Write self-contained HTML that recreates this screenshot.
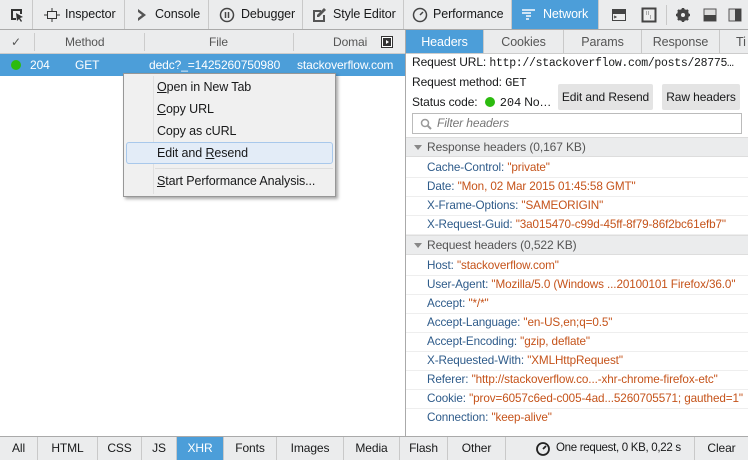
<!DOCTYPE html>
<html><head><meta charset="utf-8"><style>
*{box-sizing:border-box;margin:0;padding:0}
body{width:748px;height:460px;overflow:hidden;position:relative;background:#fff;font-family:"Liberation Sans","DejaVu Sans",sans-serif;font-size:12px;color:#18191a;letter-spacing:-0.1px}
.a{position:absolute;white-space:nowrap}
#tb{left:0;top:0;width:748px;height:30px;background:#ebeced;border-bottom:1px solid #aaa}
.t{position:absolute;top:0;height:29px;line-height:29px;border-right:1px solid #c9c9c9;font-size:12.5px;color:#18191a;white-space:nowrap}
.t svg{position:absolute;top:7px}
.net{background:#4c9ed9;color:#fff}
#colh{left:0;top:30px;width:406px;height:24px;background:#ebeced;border-bottom:1px solid #ccc;color:#555;font-size:12px;line-height:24px}
#sel{left:0;top:54px;width:406px;height:22px;background:#4c9ed9;color:#fff;line-height:22px}
#vs{left:405px;top:30px;width:1px;height:406px;background:#aaa}
#sub{left:406px;top:30px;width:342px;height:24px;background:#ebeced;border-bottom:1px solid #ccc;line-height:24px;font-size:12.5px;overflow:hidden}
.st{position:absolute;top:0;height:24px;text-align:center;border-right:1px solid #c9c9c9;color:#555}
.btn{position:absolute;background:#e4e4e4;border-radius:2px;height:26px;line-height:26px;text-align:center;color:#18191a;white-space:nowrap}
.sec{position:absolute;left:406px;width:342px;height:20px;background:#ebeced;border-top:1px solid #ddd;border-bottom:1px solid #ddd;line-height:19px;color:#555;padding-left:21px;white-space:nowrap}
.sec:before{content:"";position:absolute;left:8px;top:7px;border:4px solid transparent;border-top:5px solid #888}
.r{position:absolute;left:406px;width:342px;height:19px;line-height:18px;border-bottom:1px solid #eee;padding-left:21px;color:#2e5b8a;white-space:nowrap;overflow:hidden;font-size:11.7px}
.r b{font-weight:normal;color:#c5531a}
#bb{left:0;top:436px;width:748px;height:24px;background:#ebeced;border-top:1px solid #aaa;line-height:23px}
.f{position:absolute;top:0;height:23px;text-align:center;border-right:1px solid #c9c9c9;color:#18191a}
#cm{left:123px;top:73px;width:213px;height:124px;background:#f0f0f0;border:1px solid #979797;box-shadow:2px 2px 3px rgba(0,0,0,.35)}
.mi{position:absolute;left:33px;font-size:12.5px;white-space:nowrap}
u{text-decoration:underline}
</style></head><body>
<div class="a" id="tb">
 <div class="t" style="left:0;width:33px"><svg width="16" height="16" style="left:9px"><path d="M2 2h11v5h-2V4H4v7h3v2H2z" fill="#333"/><path d="M7 6l7 4-3 1 2 3-1 1-2-3-2 2z" fill="#333"/></svg></div>
 <div class="t" style="left:33px;width:92px;padding-left:32px"><svg width="16" height="16" style="left:11px"><rect x="3.5" y="4.5" width="9" height="7" fill="none" stroke="#333"/><path d="M0 8h3M13 8h3M8 1v3M8 12v3" stroke="#333"/></svg>Inspector</div>
 <div class="t" style="left:125px;width:84px;padding-left:30px"><svg width="16" height="16" style="left:10px"><path d="M3 2l8 6-8 6V11l4-3-4-3z" fill="#555"/></svg>Console</div>
 <div class="t" style="left:209px;width:94px;padding-left:32px"><svg width="16" height="16" style="left:10px"><circle cx="8" cy="8" r="6.5" fill="none" stroke="#444" stroke-width="1.5"/><path d="M6.5 5v6M9.5 5v6" stroke="#444" stroke-width="1.5"/></svg>Debugger</div>
 <div class="t" style="left:303px;width:101px;padding-left:30px"><svg width="16" height="16" style="left:8px"><path d="M2 3h8v2H4v8h8V8h2v7H2z" fill="#555"/><path d="M13 1l2 2-7 7H6V8z" fill="#555"/></svg>Style Editor</div>
 <div class="t" style="left:404px;width:108px;padding-left:29px"><svg width="16" height="16" style="left:8px"><circle cx="8" cy="8" r="6.5" fill="none" stroke="#444" stroke-width="1.5"/><path d="M8 8l3-3" stroke="#444" stroke-width="1.5"/></svg>Performance</div>
 <div class="t net" style="left:512px;width:87px;padding-left:31px;color:#fff"><svg width="16" height="16" style="left:9px"><path d="M1 3h13M1 6h9M5 9h5M5 12h3" stroke="#cfe4f5" stroke-width="2"/></svg>Network</div>
 <svg class="a" style="left:611px;top:7px" width="16" height="16"><rect x="1" y="2" width="14" height="12" fill="#444"/><rect x="2" y="7" width="12" height="6" fill="#eee"/><path d="M3 9l2 1-2 1" stroke="#444" fill="none"/></svg>
 <svg class="a" style="left:641px;top:7px" width="16" height="16"><rect x="1.5" y="1.5" width="13" height="13" fill="#eee" stroke="#444" stroke-width="2"/><path d="M5 5h1M7 5h1M5 7h1M7 7h1M9 9h1M9 11h1" stroke="#666"/></svg>
 <div class="a" style="left:666px;top:5px;width:1px;height:20px;background:#c9c9c9"></div>
 <svg class="a" style="left:675px;top:7px" width="16" height="16"><circle cx="8" cy="8" r="4.5" fill="none" stroke="#444" stroke-width="3"/><path d="M8 1v14M1 8h14M3 3l10 10M13 3L3 13" stroke="#444" stroke-width="2.5"/><circle cx="8" cy="8" r="2" fill="#ebeced"/></svg>
 <svg class="a" style="left:703px;top:8px" width="14" height="14"><rect x="1" y="1" width="12" height="12" fill="#ddd" stroke="#555"/><rect x="1" y="7" width="12" height="6" fill="#444"/></svg>
 <svg class="a" style="left:728px;top:8px" width="14" height="14"><rect x="1" y="1" width="12" height="12" fill="#ddd" stroke="#555"/><rect x="7" y="1" width="6" height="12" fill="#444"/></svg>
</div>
<div class="a" id="colh">
 <span class="a" style="left:11px">✓</span>
 <div class="a" style="left:34px;top:3px;width:1px;height:18px;background:#ccc"></div>
 <span class="a" style="left:65px">Method</span>
 <div class="a" style="left:144px;top:3px;width:1px;height:18px;background:#ccc"></div>
 <span class="a" style="left:209px">File</span>
 <div class="a" style="left:293px;top:3px;width:1px;height:18px;background:#ccc"></div>
 <span class="a" style="left:333px">Domai</span>
 <svg class="a" style="left:381px;top:6px" width="12" height="12"><rect x="0.5" y="0.5" width="11" height="11" fill="#fff" stroke="#333"/><rect x="2" y="2" width="8" height="8" fill="#333"/><path d="M5 4l3 2-3 2z" fill="#fff"/></svg>
</div>
<div class="a" id="sel">
 <span class="a" style="left:11px;top:6px;width:10px;height:10px;border-radius:5px;background:#2cbb0f"></span>
 <span class="a" style="left:30px">204</span>
 <span class="a" style="left:75px">GET</span>
 <span class="a" style="left:149px">dedc?_=1425260750980</span>
 <span class="a" style="left:297px">stackoverflow.com</span>
</div>
<div class="a" id="vs"></div>
<div class="a" id="sub">
 <div class="st net" style="left:0;width:78px;color:#fff">Headers</div>
 <div class="st" style="left:78px;width:80px">Cookies</div>
 <div class="st" style="left:158px;width:78px">Params</div>
 <div class="st" style="left:236px;width:78px">Response</div>
 <div class="st" style="left:314px;width:40px;border:0;text-align:left;padding-left:16px">Ti</div>
</div>
<div class="a" style="left:412px;top:55px;width:334px;overflow:hidden">Request URL: <span style="font-family:'Liberation Mono',monospace;font-size:11.5px;letter-spacing:-0.3px">http://stackoverflow.com/posts/28775…</span></div>
<div class="a" style="left:412px;top:75px">Request method: <span style="font-family:'Liberation Mono',monospace">GET</span></div>
<div class="a" style="left:412px;top:95px">Status code: <span style="display:inline-block;width:10px;height:10px;border-radius:5px;background:#2cbb0f;margin:0 5px 0 4px;vertical-align:-1px"></span><span style="font-family:'Liberation Mono',monospace">204</span> No…</div>
<div class="btn" style="left:558px;top:84px;width:95px">Edit and Resend</div>
<div class="btn" style="left:662px;top:84px;width:78px">Raw headers</div>
<div class="a" style="left:412px;top:113px;width:330px;height:21px;border:1px solid #bbb;background:#fff;line-height:19px;padding-left:24px;color:#777;font-style:italic">Filter headers
 <svg class="a" style="left:7px;top:4px" width="12" height="12"><circle cx="5" cy="5" r="3.5" fill="none" stroke="#999" stroke-width="1.5"/><path d="M7.5 7.5l3.5 3.5" stroke="#999" stroke-width="2"/></svg></div>
<div class="sec" style="top:137px">Response headers (0,167 KB)</div>
<div class="r" style="top:159px">Cache-Control: <b>"private"</b></div>
<div class="r" style="top:178px">Date: <b>"Mon, 02 Mar 2015 01:45:58 GMT"</b></div>
<div class="r" style="top:197px">X-Frame-Options: <b>"SAMEORIGIN"</b></div>
<div class="r" style="top:216px">X-Request-Guid: <b>"3a015470-c99d-45ff-8f79-86f2bc61efb7"</b></div>
<div class="sec" style="top:235px">Request headers (0,522 KB)</div>
<div class="r" style="top:257px">Host: <b>"stackoverflow.com"</b></div>
<div class="r" style="top:276px">User-Agent: <b>"Mozilla/5.0 (Windows ...20100101 Firefox/36.0"</b></div>
<div class="r" style="top:295px">Accept: <b>"*/*"</b></div>
<div class="r" style="top:314px">Accept-Language: <b>"en-US,en;q=0.5"</b></div>
<div class="r" style="top:333px">Accept-Encoding: <b>"gzip, deflate"</b></div>
<div class="r" style="top:352px">X-Requested-With: <b>"XMLHttpRequest"</b></div>
<div class="r" style="top:371px">Referer: <b>"http://stackoverflow.co...-xhr-chrome-firefox-etc"</b></div>
<div class="r" style="top:390px">Cookie: <b>"prov=6057c6ed-c005-4ad...5260705571; gauthed=1"</b></div>
<div class="r" style="top:409px;border:0">Connection: <b>"keep-alive"</b></div>
<div class="a" id="bb">
 <div class="f" style="left:0;width:38px">All</div>
 <div class="f" style="left:38px;width:60px">HTML</div>
 <div class="f" style="left:98px;width:44px">CSS</div>
 <div class="f" style="left:142px;width:35px">JS</div>
 <div class="f net" style="left:177px;width:47px;color:#fff">XHR</div>
 <div class="f" style="left:224px;width:53px">Fonts</div>
 <div class="f" style="left:277px;width:67px">Images</div>
 <div class="f" style="left:344px;width:56px">Media</div>
 <div class="f" style="left:400px;width:48px">Flash</div>
 <div class="f" style="left:448px;width:58px">Other</div>
 <svg class="a" style="left:536px;top:5px" width="14" height="14"><circle cx="7" cy="7" r="6" fill="none" stroke="#222" stroke-width="1.8"/><path d="M7 7l3-3" stroke="#222" stroke-width="1.8"/></svg>
 <span class="a" style="left:556px;font-size:11.5px;letter-spacing:-0.3px">One request, 0 KB, 0,22 s</span>
 <div class="f" style="left:694px;width:54px;border-left:1px solid #c9c9c9;border-right:0">Clear</div>
</div>
<div class="a" id="cm">
 <div class="a" style="left:29px;top:2px;width:1px;height:118px;background:#e0e0e0"></div>
 <div class="mi" style="top:6px"><u>O</u>pen in New Tab</div>
 <div class="mi" style="top:28px"><u>C</u>opy URL</div>
 <div class="mi" style="top:50px">Copy as cURL</div>
 <div class="a" style="left:2px;top:68px;width:207px;height:22px;background:#e3ecf7;border:1px solid #a8c8eb;border-radius:3px"></div>
 <div class="mi" style="top:72px">Edit and <u>R</u>esend</div>
 <div class="a" style="left:31px;top:94px;width:178px;height:1px;background:#ddd"></div>
 <div class="mi" style="top:100px"><u>S</u>tart Performance Analysis...</div>
</div>
</body></html>
